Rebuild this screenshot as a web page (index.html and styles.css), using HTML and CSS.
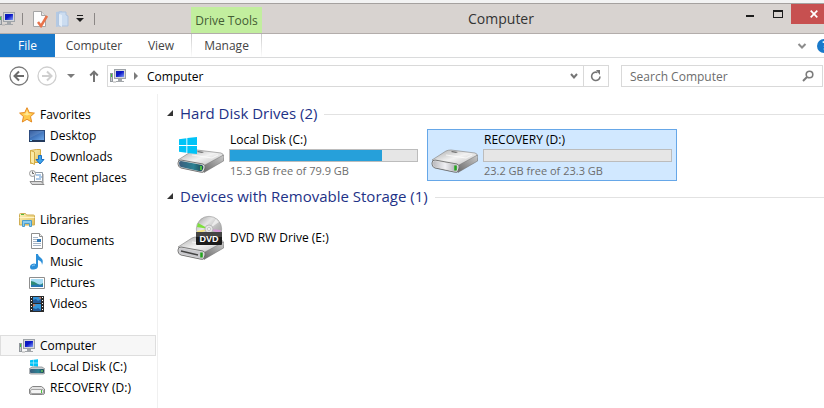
FILE: index.html
```html
<!DOCTYPE html>
<html lang="en">
<head>
    <meta charset="UTF-8">
    <meta name="viewport" content="width=device-width, initial-scale=1.0">
    <title>Computer</title>
    <link rel="stylesheet" href="styles.css">
</head>
<body>
    <!-- shared icons -->
    <svg class="defs" width="0" height="0" aria-hidden="true">
        <defs>
            <linearGradient id="screen" x1="0" y1="0" x2="1" y2="1">
                <stop offset="0" stop-color="#0a1fb0"/>
                <stop offset=".45" stop-color="#0c18c8"/>
                <stop offset="1" stop-color="#7f9cf5"/>
            </linearGradient>
            <linearGradient id="driveTop" x1="0" y1="0" x2="1" y2="1">
                <stop offset="0" stop-color="#a9a9a9"/>
                <stop offset=".5" stop-color="#f2f2f2"/>
                <stop offset="1" stop-color="#b5b5b5"/>
            </linearGradient>
            <linearGradient id="driveSide" x1="0" y1="1" x2="1" y2="0">
                <stop offset="0" stop-color="#6a6a6a"/>
                <stop offset="1" stop-color="#c9c9c9"/>
            </linearGradient>
            <linearGradient id="driveFront" x1="0" y1="0" x2="1" y2="0">
                <stop offset="0" stop-color="#b9b9bd"/>
                <stop offset=".5" stop-color="#f0f0f4"/>
                <stop offset="1" stop-color="#a5a5aa"/>
            </linearGradient>
            <linearGradient id="driveTeal" x1="0" y1="0" x2="1" y2="0">
                <stop offset="0" stop-color="#3c5d7c"/>
                <stop offset=".6" stop-color="#2b8193"/>
                <stop offset="1" stop-color="#1b4650"/>
            </linearGradient>
            <linearGradient id="disc" x1="0" y1="0" x2="1" y2="1">
                <stop offset="0" stop-color="#9c9c9c"/>
                <stop offset=".35" stop-color="#e6e6e6"/>
                <stop offset=".6" stop-color="#bcbcbc"/>
                <stop offset="1" stop-color="#8f8f8f"/>
            </linearGradient>
            <linearGradient id="gold" x1="0" y1="0" x2="1" y2="1">
                <stop offset="0" stop-color="#fdf3bd"/>
                <stop offset="1" stop-color="#e3bd55"/>
            </linearGradient>
            <linearGradient id="blue" x1="0" y1="0" x2="1" y2="1">
                <stop offset="0" stop-color="#1d4a94"/>
                <stop offset="1" stop-color="#6aa5e8"/>
            </linearGradient>
        </defs>

        <symbol id="i-computer" viewBox="0 0 16 16">
            <rect x="4.500" y="1.500" width="11" height="9" fill="#d5d8dc" stroke="#9ea3a8"/>
            <rect x="6" y="3" width="8" height="6" fill="url(#screen)"/>
            <path d="M8 11h4v2h2v1H6v-1h2z" fill="#a2a6aa"/>
            <rect x=".5" y="5.500" width="2" height="8" fill="#c6cace" stroke="#92979c"/>
            <rect x="1" y="6" width="1" height="3" fill="#3fc43f"/>
            <path d="M3 14h3" stroke="#b0b0b0"/>
        </symbol>

        <symbol id="i-drive" viewBox="0 0 48 24">
            <path d="M3 19l23 5 21-12v-3z" fill="#000" opacity=".2"/>
            <path d="M1 11L15 2q2-1 5-1l24 3q3 1 2 3L28 17z" fill="url(#driveTop)" stroke="#8c8c8c" stroke-width=".7"/>
            <path d="M28 16L46.500 6v6L27 23.500z" fill="url(#driveSide)" stroke="#777" stroke-width=".5"/>
            <path d="M1 14q0-3 3-3l22 4q3 1 2 4l-1 3q-1 2-4 1L4 19q-3-1-3-4z" fill="#dcdcdc" stroke="#606060" stroke-width=".8"/>
            <path d="M21 2l6 1-2 1-5-1z" fill="#707070"/>
            <path d="M15 6l20 3 6-3" fill="none" stroke="#fff" opacity=".7"/>
        </symbol>

        <symbol id="i-winlogo" viewBox="0 0 18 17">
            <path d="M0 2.200L7.400 1.200V8H0zM8.300 1L18 0v8H8.300zM0 9h7.400v6.800L0 14.800zM8.300 9H18v8l-9.700-1.100z" fill="#00c3f7"/>
        </symbol>
    </svg>

    <div class="window">
        <header class="titlebar">
            <div class="quick-access">
                <svg width="16" height="16"><use href="#i-computer"/></svg>
                <span class="divider"></span>
                <button class="quick-button" aria-label="Properties">
                    <svg width="16" height="18" viewBox="0 0 16 18">
                        <path d="M1.500 1.500h8l4 4v11h-12z" fill="#fdfdfd" stroke="#a5a5a5"/>
                        <path d="M9.500 1.500v4h4" fill="#e5e5e5" stroke="#a5a5a5"/>
                        <path d="M6 12l3 4 6-10" fill="none" stroke="#e8734a" stroke-width="2.500"/>
                    </svg>
                </button>
                <button class="quick-button" aria-label="New folder">
                    <svg width="14" height="18" viewBox="0 0 14 18">
                        <path d="M1 2l6-1v15l-6 1z" fill="#b4c9e3"/>
                        <path d="M4 2h7v3l2 1v10H4z" fill="#cbdcf0" stroke="#adc3df"/>
                        <path d="M4 4l3 1v12l-3-2z" fill="#e3edf8"/>
                    </svg>
                </button>
                <button class="quick-button" aria-label="Customize toolbar">
                    <svg width="8" height="7" viewBox="0 0 8 7"><path d="M1 0h6v1H1zM0 3h8L4 7z" fill="#1e1e1e"/></svg>
                </button>
                <span class="divider"></span>
            </div>
            <div class="tool-group">Drive Tools</div>
            <h1 class="window-title">Computer</h1>
            <div class="window-buttons">
                <button class="window-button" aria-label="Minimize">
                    <svg width="12" height="10" viewBox="0 0 12 10"><path d="M1 6h8v2H1z" fill="#1c1c1c"/></svg>
                </button>
                <button class="window-button" aria-label="Maximize">
                    <svg width="12" height="10" viewBox="0 0 12 10"><path d="M1 1h10v8H1zM2 3v5h8V3z" fill="#1c1c1c" fill-rule="evenodd"/></svg>
                </button>
                <button class="window-button close" aria-label="Close">
                    <svg width="8" height="8" viewBox="0 0 8 8"><path d="M.7.700l6.600 6.600M7.300.700L.7 7.300" stroke="#fff" stroke-width="1.700"/></svg>
                </button>
            </div>
        </header>

        <nav class="ribbon">
            <button class="tab file">File</button>
            <button class="tab computer">Computer</button>
            <button class="tab view">View</button>
            <button class="tab manage">Manage</button>
            <div class="ribbon-end">
                <button class="plain-button" aria-label="Expand ribbon">
                    <svg width="10" height="8" viewBox="0 0 10 8"><path d="M1.500 2L5 5.500 8.500 2" fill="none" stroke="#8c8c8c" stroke-width="2"/></svg>
                </button>
                <button class="plain-button help" aria-label="Help">?</button>
            </div>
        </nav>

        <div class="toolbar">
            <button class="plain-button" aria-label="Back">
                <svg width="20" height="20" viewBox="0 0 20 20"><circle cx="10" cy="10" r="9" fill="#fff" stroke="#7b7b7b" stroke-width="1.300"/><path d="M15 10H6M10 5.500L5.500 10l4.500 4.500" fill="none" stroke="#6b6b6b" stroke-width="2"/></svg>
            </button>
            <button class="plain-button forward" aria-label="Forward">
                <svg width="20" height="20" viewBox="0 0 20 20"><circle cx="10" cy="10" r="9" fill="#fff" stroke="#cfcfcf" stroke-width="1.300"/><path d="M5 10h9M10 5.500l4.500 4.500-4.500 4.500" fill="none" stroke="#cfcfcf" stroke-width="2"/></svg>
            </button>
            <button class="plain-button recent" aria-label="Recent locations">
                <svg width="8" height="4" viewBox="0 0 8 4"><path d="M0 0h8L4 4z" fill="#7b7b7b"/></svg>
            </button>
            <button class="plain-button up" aria-label="Up">
                <svg width="10" height="12" viewBox="0 0 10 12"><path d="M5 12V2M1.200 5.500L5 1.700l3.800 3.800" fill="none" stroke="#757575" stroke-width="2"/></svg>
            </button>
            <div class="address">
                <svg width="16" height="16"><use href="#i-computer"/></svg>
                <svg class="crumb-arrow" width="4" height="8" viewBox="0 0 4 8"><path d="M0 0l4 4-4 4z" fill="#7b7b7b"/></svg>
                <a class="crumb" href="#">Computer</a>
                <button class="plain-button history" aria-label="Previous locations">
                    <svg width="8" height="8" viewBox="0 0 8 8"><path d="M1 2l3 3.500L7 2" fill="none" stroke="#757575" stroke-width="2"/></svg>
                </button>
                <button class="plain-button refresh" aria-label="Refresh">
                    <svg width="12" height="12" viewBox="0 0 12 12"><path d="M7.500 2.500A4.200 4.200 0 1 0 10 6.500" fill="none" stroke="#757575" stroke-width="1.600"/><path d="M6 0h4v5z" fill="#757575"/></svg>
                </button>
            </div>
            <label class="search">
                <input type="text" placeholder="Search Computer" aria-label="Search Computer">
                <svg width="12" height="12" viewBox="0 0 12 12"><circle cx="7.500" cy="4.500" r="3.300" fill="none" stroke="#7b7b7b" stroke-width="1.600"/><path d="M5 7L1 11" stroke="#7b7b7b" stroke-width="2"/></svg>
            </label>
        </div>

        <div class="main">
            <aside class="sidebar">
                <ul class="tree">
                    <li><a class="node root" href="#">
                        <svg width="16" height="16" viewBox="0 0 16 16"><path d="M8 .7l2.200 4.800 5.200.6-3.900 3.500 1.200 5.400L8 12.300 3.300 15l1.200-5.400L.6 6.100l5.200-.6z" fill="#ffc94a" stroke="#e58a22"/><path d="M8 3l1.300 3.500 3 .5L8 8.500 4 7l2.700-.5z" fill="#ffe896"/></svg>
                        Favorites</a></li>
                    <li><a class="node" href="#">
                        <svg width="16" height="16" viewBox="0 0 16 16"><path d="M0 2h16v12H0z" fill="#2d4c80"/><path d="M1 3h14v9H1z" fill="url(#blue)"/><path d="M1 3h14L1 10z" fill="#fff" opacity=".12"/><path d="M0 12h16v2H0z" fill="#233a5c"/><path d="M1 12h2v1H1z" fill="#7fd0ff"/></svg>
                        Desktop</a></li>
                    <li><a class="node" href="#">
                        <svg width="16" height="16" viewBox="0 0 16 16"><path d="M1.500 1.500l6-1h4v13h-6l-4 1z" fill="url(#gold)" stroke="#d3aa44"/><path d="M1.500 1.500l4 1.500v12.500l-4-2z" fill="#fbeaa5" stroke="#d3aa44"/><path d="M9.500 6.500h3v4h2.500L11 15 7 10.500h2.500z" fill="#3da4ec" stroke="#1f6fc0"/></svg>
                        Downloads</a></li>
                    <li><a class="node" href="#">
                        <svg width="16" height="16" viewBox="0 0 16 16"><path d="M5.500 2.500h8v9h-8z" fill="#fff" stroke="#8f9aa5"/><path d="M7 5h5M10 7h3M7 9h5" stroke="#5b93cf"/><path d="M1 11.500h11l3 3H3z" fill="#d8d8d8" stroke="#8a8a8a"/><path d="M14 4v9l-2-2" fill="none" stroke="#999"/><circle cx="3.500" cy="3.500" r="3" fill="#f5f5f5" stroke="#9b9b9b"/><path d="M3.500 1.500v2h1.500" fill="none" stroke="#666"/></svg>
                        Recent places</a></li>
                </ul>
                <ul class="tree">
                    <li><a class="node root" href="#">
                        <svg width="16" height="16" viewBox="0 0 16 16"><path d="M.5 2.500q0-1 1-1h5l1 1.500h7q1 0 1 1v9H.5z" fill="url(#gold)" stroke="#cfae55"/><path d="M2 2h3v1H2z" fill="#55b83f"/><path d="M.5 5.500h15" stroke="#fff3c4"/><path d="M3.500 14.500v-6h9v6h-2v-3h-5v3z" fill="#8dcbed" stroke="#4a9dcc"/></svg>
                        Libraries</a></li>
                    <li><a class="node" href="#">
                        <svg width="16" height="16" viewBox="0 0 16 16"><path d="M2.500.5h8l3 3v12h-11z" fill="#fff" stroke="#8f8f8f"/><path d="M10.500.5v3h3" fill="#eee" stroke="#8f8f8f"/><path d="M4 4.500h5M4 6.500h4M4 8.500h4M4 10.500h8M4 12.500h8" stroke="#a8b5c5"/><path d="M8 6h4v3H8z" fill="#2f78b7"/></svg>
                        Documents</a></li>
                    <li><a class="node" href="#">
                        <svg width="16" height="16" viewBox="0 0 16 16"><path d="M7 0h2q0 2 3 4 3 2 1 7 0-4-4-5v6q0 3-4 3.500Q1 16 1 13q0-3 4-3.500 1 0 2 .5z" fill="#2b8fd9"/><path d="M3 12q1-1 3-1" stroke="#8fcdf7" fill="none"/></svg>
                        Music</a></li>
                    <li><a class="node" href="#">
                        <svg width="16" height="16" viewBox="0 0 16 16"><path d="M.5 2.500h15v11H.5z" fill="#fff" stroke="#8e8e8e"/><path d="M2 4h12v8H2z" fill="#a7dcf5"/><path d="M2 6q3 0 6 2.500T14 8v4H2z" fill="#2d8a76"/><path d="M2 10q6-1 12 0v2H2z" fill="#2877b5"/></svg>
                        Pictures</a></li>
                    <li><a class="node" href="#">
                        <svg width="16" height="16" viewBox="0 0 16 16"><path d="M1 0h14v16H1z" fill="#2b2b2b"/><path d="M4 1h8v6H4zM4 8h8v7H4z" fill="#3596dc"/><path d="M4 4l3-1 2 2 3-2v4H4zM4 12l3 1 2-1 3 2v1H4z" fill="#245a99"/><path d="M9 2l3-1v2zM4 8l3 1-3 2z" fill="#cf7450"/><path d="M2.500 1v15M13.500 1v15" stroke="#fff" stroke-dasharray="1 2"/></svg>
                        Videos</a></li>
                </ul>
                <ul class="tree">
                    <li><a class="node root selected" href="#">
                        <svg width="16" height="16"><use href="#i-computer"/></svg>
                        Computer</a></li>
                    <li><a class="node" href="#">
                        <svg width="16" height="16" viewBox="0 0 16 16"><use href="#i-winlogo" x="1" y="0" width="8" height="8"/><path d="M0 10l3-2h10l3 2v3q0 2-2 2H2q-2 0-2-2z" fill="#c9cdd0" stroke="#888d92" stroke-width=".8"/><rect x="1" y="10" width="14" height="4" rx="1" fill="url(#driveTeal)"/><path d="M13 11v2" stroke="#7cf05c"/></svg>
                        Local Disk (C:)</a></li>
                    <li><a class="node" href="#">
                        <svg width="16" height="16" viewBox="0 0 16 16"><path d="M.5 9l3-2.500h9l3 2.500v4q0 1.500-2 1.500h-11q-2 0-2-1.500z" fill="#e2e2e2" stroke="#858585"/><rect x="1.500" y="9.500" width="13" height="4" rx="1.500" fill="#f4f4f4" stroke="#a5a5a5"/><path d="M12.500 10v3" stroke="#4cc43c"/></svg>
                        RECOVERY (D:)</a></li>
                </ul>
            </aside>

            <main class="content">
                <section class="group">
                    <h2 class="group-title">
                        <svg width="6" height="6" viewBox="0 0 6 6"><path d="M6 0v6H0z" fill="#333"/></svg>
                        Hard Disk Drives (2)
                    </h2>
                    <div class="tiles">
                        <a class="tile" href="#">
                            <svg width="48" height="48" viewBox="0 0 48 48">
                                <use href="#i-drive" x="0" y="18" width="48" height="24"/>
                                <path d="M2 32q0-2 2-2l21 4q2 1 1 4-1 3-4 2L4 36q-2-1-2-4z" fill="url(#driveTeal)"/>
                                <path d="M24 35v4" stroke="#5be03a" stroke-width="1.500"/>
                                <use href="#i-winlogo" x="2" y="6" width="18" height="17"/>
                            </svg>
                            <div class="tile-info">
                                <div class="tile-name">Local Disk (C:)</div>
                                <div class="usage"><div class="usage-fill" style="width: 81.500%"></div></div>
                                <div class="tile-space">15.3 GB free of 79.9 GB</div>
                            </div>
                        </a>
                        <a class="tile selected" href="#">
                            <svg width="48" height="48" viewBox="0 0 48 48">
                                <use href="#i-drive" x="0" y="18" width="48" height="24"/>
                                <path d="M2 32q0-2 2-2l21 4q2 1 1 4-1 3-4 2L4 36q-2-1-2-4z" fill="url(#driveFront)"/>
                                <path d="M24.500 34.500v5" stroke="#23a51d" stroke-width="2.500"/>
                            </svg>
                            <div class="tile-info">
                                <div class="tile-name">RECOVERY (D:)</div>
                                <div class="usage"><div class="usage-fill" style="width: 0%"></div></div>
                                <div class="tile-space">23.2 GB free of 23.3 GB</div>
                            </div>
                        </a>
                    </div>
                </section>

                <section class="group">
                    <h2 class="group-title">
                        <svg width="6" height="6" viewBox="0 0 6 6"><path d="M6 0v6H0z" fill="#333"/></svg>
                        Devices with Removable Storage (1)
                    </h2>
                    <div class="tiles">
                        <a class="tile" href="#">
                            <svg width="48" height="48" viewBox="0 0 48 48">
                                <use href="#i-drive" x="0" y="22" width="48" height="24"/>
                                <path d="M2 36q0-2 2-2l21 4q2 1 1 4-1 3-4 2L4 40q-2-1-2-4z" fill="#c9c9cd"/>
                                <path d="M4 37l17 4" stroke="#444" stroke-width="1.300"/>
                                <path d="M24.500 38.500v5" stroke="#23a51d" stroke-width="2.500"/>
                                <circle cx="32" cy="15" r="12.700" fill="url(#disc)" stroke="#999" stroke-width=".6"/>
                                <path d="M32 15L21 9l-1 4z" fill="#7de03c"/>
                                <path d="M32 15l12 1-1 4z" fill="#d59ad8"/>
                                <path d="M32 15l7-10 3 3z" fill="#fff" opacity=".6"/>
                                <path d="M32 15l-11 5-1-3z" fill="#f3e27c"/>
                                <circle cx="32" cy="15" r="4" fill="#e5e5e5" stroke="#aaa" stroke-width=".7"/>
                                <circle cx="32" cy="15" r="1.500" fill="#fff" stroke="#999" stroke-width=".5"/>
                                <rect x="19" y="18" width="26" height="13" rx="1" fill="#1b1b1b"/>
                                <path d="M19 19q0-1 1-1h24q1 0 1 1v4H19z" fill="#444"/>
                                <text class="dvd-label" x="32" y="28" text-anchor="middle">DVD</text>
                            </svg>
                            <div class="tile-info">
                                <div class="tile-name">DVD RW Drive (E:)</div>
                            </div>
                        </a>
                    </div>
                </section>
            </main>
        </div>
    </div>
</body>
</html>
```

FILE: styles.css
```css
* {
    box-sizing: border-box;
}
body {
    font-family: "Open Sans", "Noto Sans", sans-serif;
    font-size: 12px;
    color: #000;
    background: #fff;
    margin: 0;
    overflow: hidden;
}
a {
    color: inherit;
    text-decoration: none;
}
button {
    font: inherit;
    color: inherit;
    background: none;
    border: none;
    margin: 0;
    padding: 0;
    cursor: pointer;
}
svg {
    display: block;
    flex: none;
}
.defs {
    position: absolute;
}
/* the window runs a little past the right edge of the screen */
.window {
    display: flex;
    flex-direction: column;
    min-height: 100vh;
    margin-right: -12px;
    border-top: 3px solid #f3f3f3;
}

/* title bar */
.titlebar {
    display: flex;
    align-items: stretch;
    height: 31px;
    background: #d8d3d0;
    border-top: 1px solid #a5a19f;
    border-bottom: 1px solid #b3adab;
}
.quick-access {
    display: flex;
    align-items: center;
    width: 191px;
    gap: 7px;
}
.quick-access > svg {
    margin-left: -1px;
}
.quick-button {
    display: flex;
}
.divider {
    width: 1px;
    height: 12px;
    margin-right: 2px;
    background: #8b8785;
}
.divider:last-child {
    margin-left: 3px;
}
.tool-group {
    width: 71px;
    margin-top: 3px;
    background: #c2ee9e;
    color: #445c34;
    line-height: 28px;
    text-align: center;
}
.window-title {
    flex: 1;
    margin: 0;
    padding-left: 3px;
    font-size: 14px;
    font-weight: normal;
    line-height: 29px;
    text-align: center;
    color: #333;
}
.window-buttons {
    display: flex;
    align-items: flex-start;
}
.window-button {
    display: flex;
    align-items: center;
    justify-content: center;
    width: 27px;
    height: 20px;
}
.window-button.close {
    width: 45px;
    background: #c75050;
}

/* ribbon tabs */
.ribbon {
    display: flex;
    height: 24px;
    border-bottom: 1px solid #dadbdc;
    color: #444;
}
.tab {
    line-height: 24px;
}
.tab.file {
    width: 55px;
    background: #1979ca;
    color: #fff;
}
.tab.computer {
    width: 78px;
}
.tab.view {
    width: 56px;
    margin-right: 2px;
}
.tab.manage {
    width: 71px;
    border: solid #d5d5d5;
    border-width: 0 1px;
    border-image: linear-gradient(#c8c8c8, #fff) 1;
    border-image-width: 0 1px;
}
.ribbon-end {
    display: flex;
    align-items: center;
    gap: 10px;
    margin-left: auto;
    padding-right: 3px;
}
.plain-button {
    display: flex;
    align-items: center;
    justify-content: center;
}
.help {
    width: 16px;
    height: 14px;
    border-radius: 8px;
    background: #1979ca;
    color: #fff;
    font-weight: bold;
}

/* navigation toolbar */
.toolbar {
    display: flex;
    align-items: center;
    height: 36px;
    padding: 0 13px 0 9px;
}
.forward {
    margin-left: 8px;
}
.recent {
    margin-left: 10px;
}
.up {
    margin: 0 8px 0 14px;
}
.address {
    display: flex;
    align-items: center;
    flex: 1;
    height: 22px;
    margin-right: 12px;
    padding-left: 2px;
    border: 1px solid #d9d9d9;
}
.crumb-arrow {
    margin: 0 9px 0 8px;
}
.history {
    width: 18px;
    margin-left: auto;
}
.refresh {
    width: 25px;
    align-self: stretch;
    border-left: 1px solid #d9d9d9;
}
.search {
    display: flex;
    align-items: center;
    width: 202px;
    height: 22px;
    padding: 0 8px;
    border: 1px solid #d9d9d9;
}
.search input {
    flex: 1;
    min-width: 0;
    padding: 0;
    border: none;
    outline: none;
    background: none;
    font: inherit;
}
.search input::placeholder {
    color: #6d6d6d;
    opacity: 1;
}

.main {
    display: flex;
    flex: 1;
}

/* folder tree */
.sidebar {
    width: 158px;
    padding-top: 10px;
    border-right: 1px solid #f0f0f0;
}
.tree {
    list-style: none;
    margin: 0 1px 21px 0;
    padding: 0;
}
.tree:last-child {
    margin-bottom: 0;
}
.node {
    display: flex;
    align-items: center;
    gap: 5px;
    height: 21px;
    padding-left: 29px;
    white-space: nowrap;
}
.node.root {
    padding-left: 19px;
}
.node.selected {
    background: #f7f7f7;
    box-shadow: inset 0 0 0 1px #dedede;
}

/* drives */
.content {
    flex: 1;
    padding: 5px 12px 0 9px;
}
.group {
    margin-bottom: 1px;
}
.group-title {
    display: flex;
    align-items: center;
    gap: 7px;
    height: 30px;
    margin: 0;
    padding-bottom: 2px;
    font-size: 15px;
    font-weight: normal;
    color: #1e3287;
}
.group-title::after {
    content: "";
    flex: 1;
    height: 1px;
    margin-top: 2px;
    background: #e2e2e2;
}
.tiles {
    display: flex;
    flex-wrap: wrap;
    gap: 4px;
    padding-left: 6px;
}
.tile {
    display: flex;
    align-items: center;
    gap: 4px;
    width: 250px;
    height: 52px;
    padding: 0 4px 0 3px;
    border: 1px solid transparent;
}
.tile.selected {
    background: #d1e8ff;
    border-color: #66a7e8;
}
.tile-info {
    flex: 1;
}
.tile-name, .tile-space {
    padding-left: 1px;
    line-height: 18px;
}
.tile-space {
    font-size: 11px;
    color: #6d6d6d;
}
.usage {
    height: 13px;
    background: #e6e6e6;
    border: 1px solid #bcbcbc;
}
.usage-fill {
    height: 100%;
    background: #26a0da;
}
.dvd-label {
    font-family: "Liberation Sans", sans-serif;
    font-size: 9px;
    font-weight: bold;
    fill: #fff;
}
```
